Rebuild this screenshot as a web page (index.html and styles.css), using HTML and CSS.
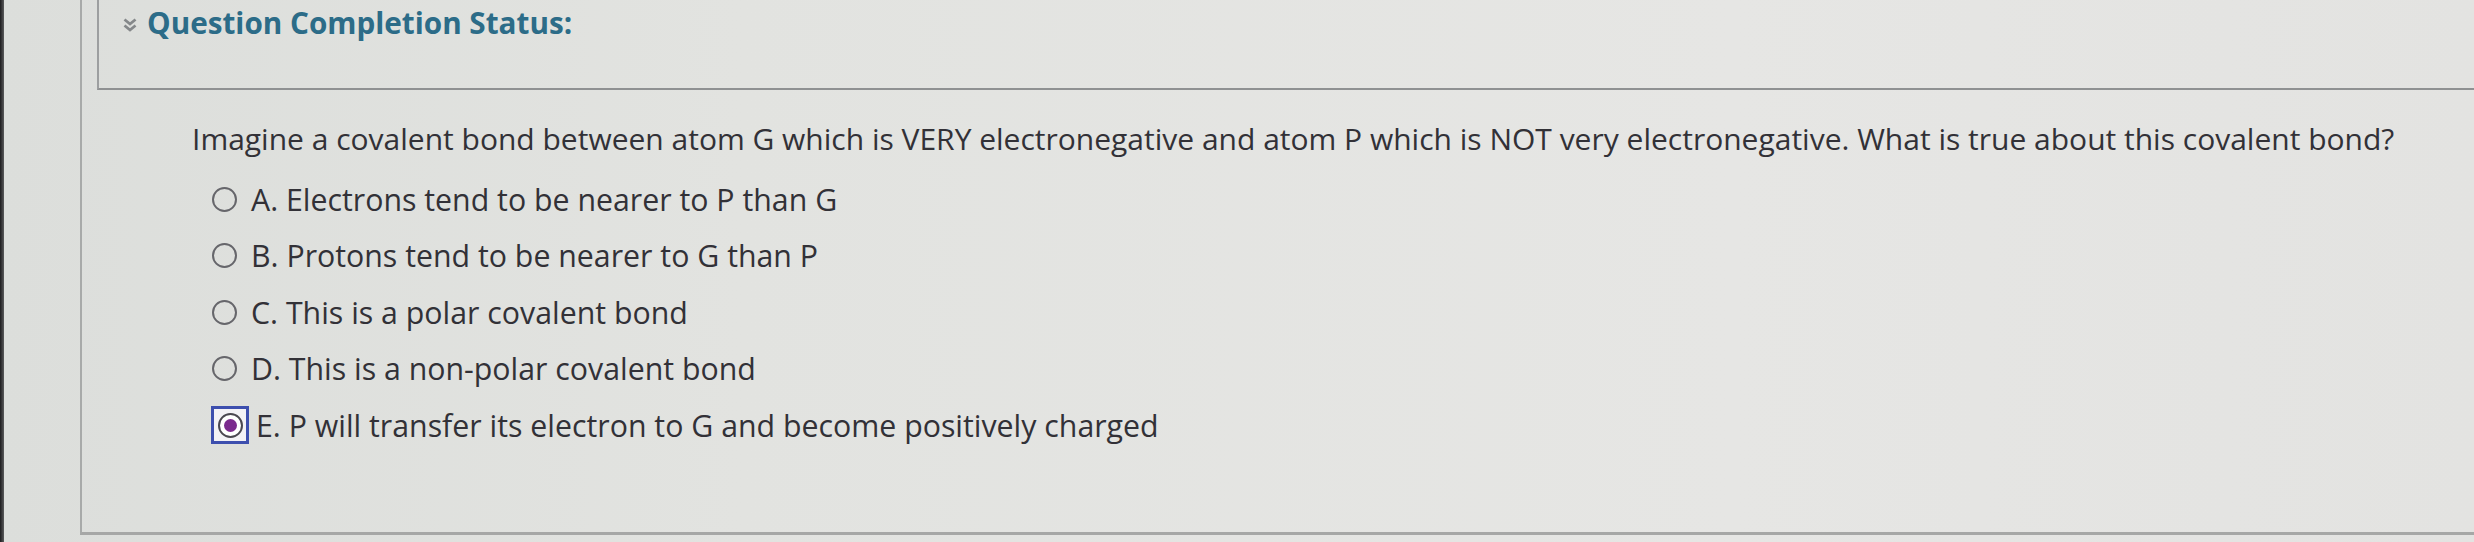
FILE: index.html
```html
<!DOCTYPE html>
<html lang="en">
<head>
<meta charset="utf-8">
<title>Question Completion Status</title>
<link rel="stylesheet" href="styles.css">
</head>
<body>
<div class="screen">
  <div class="bezel"></div>
  <div class="gutter"></div>
  <div class="outer">
    <div class="status">
      <svg class="chev" viewBox="0 0 16 16" width="16" height="16" aria-hidden="true">
        <polyline points="2.5,2.5 8,7 13.5,2.5" fill="none" stroke="#85888a" stroke-width="2.8" stroke-linejoin="miter"/>
        <polyline points="2.5,8.5 8,13 13.5,8.5" fill="none" stroke="#85888a" stroke-width="2.8" stroke-linejoin="miter"/>
      </svg>
      <span class="title">Question Completion Status:</span>
    </div>
    <div class="question">
      <p class="stem">Imagine a covalent bond between atom G which is VERY electronegative and atom P which is NOT very electronegative. What is true about this covalent bond?</p>
      <ul class="options">
        <li class="option"><span class="radio"></span><span class="label">A. Electrons tend to be nearer to P than G</span></li>
        <li class="option"><span class="radio"></span><span class="label">B. Protons tend to be nearer to G than P</span></li>
        <li class="option"><span class="radio"></span><span class="label">C. This is a polar covalent bond</span></li>
        <li class="option"><span class="radio"></span><span class="label">D. This is a non-polar covalent bond</span></li>
        <li class="option"><span class="focus"><span class="radio checked"><span class="dot"></span></span></span><span class="label">E. P will transfer its electron to G and become positively charged</span></li>
      </ul>
    </div>
  </div>
</div>
</body>
</html>
```

FILE: styles.css
```css
html, body {
  margin: 0;
  padding: 0;
}

body {
  width: 2474px;
  height: 542px;
  overflow: hidden;
  background: linear-gradient(90deg, #dcdedb 0%, #e2e3e0 30%, #e6e6e4 70%, #e3e3e1 100%);
  font-family: "Open Sans", "Noto Sans", "Liberation Sans", sans-serif;
  color: #323137;
}

.screen {
  display: flex;
  height: 542px;
}

.bezel {
  width: 4px;
  background: linear-gradient(90deg, #1c1c1e, #5a5b5c);
  flex: none;
}

.gutter {
  width: 76px;
  flex: none;
}

.outer {
  flex: 1;
  height: 532px;
  border-left: 2px solid #a8aaa9;
  border-bottom: 3px solid #a6a7a6;
}

.status {
  margin-left: 15px;
  height: 90px;
  box-sizing: border-box;
  border-left: 2px solid #9d9fa0;
  border-bottom: 2px solid #8f9192;
  display: flex;
  align-items: flex-start;
  padding-left: 23px;
  padding-top: 3px;
}

.chev {
  margin-top: 14px;
  margin-right: 9px;
  flex: none;
}

.title {
  font-weight: 700;
  font-size: 29.7px;
  line-height: 40px;
  color: #2c6c88;
}

.question {
  padding-left: 110px;
}

.stem {
  margin: 29px 0 0 0;
  font-size: 30px;
  line-height: 40px;
}

.options {
  list-style: none;
  margin: 12px 0 0 0;
  padding: 0 0 0 20px;
}

.option {
  height: 56.5px;
  display: flex;
  align-items: center;
  font-size: 30.3px;
}

.radio {
  width: 25px;
  height: 25px;
  box-sizing: border-box;
  border: 2px solid #66666b;
  border-radius: 50%;
  margin-right: 14px;
  flex: none;
  display: flex;
  align-items: center;
  justify-content: center;
}

.focus {
  width: 38px;
  height: 38px;
  box-sizing: border-box;
  border: 3px solid #3d4fae;
  background: #f3f2f6;
  margin-left: -1px;
  margin-right: 7px;
  display: flex;
  align-items: center;
  justify-content: center;
  flex: none;
}

.radio.checked {
  margin-right: 0;
  border-color: #4a4850;
  background: #ffffff;
}

.dot {
  width: 13px;
  height: 13px;
  border-radius: 50%;
  background: #7a2a8d;
}
```
